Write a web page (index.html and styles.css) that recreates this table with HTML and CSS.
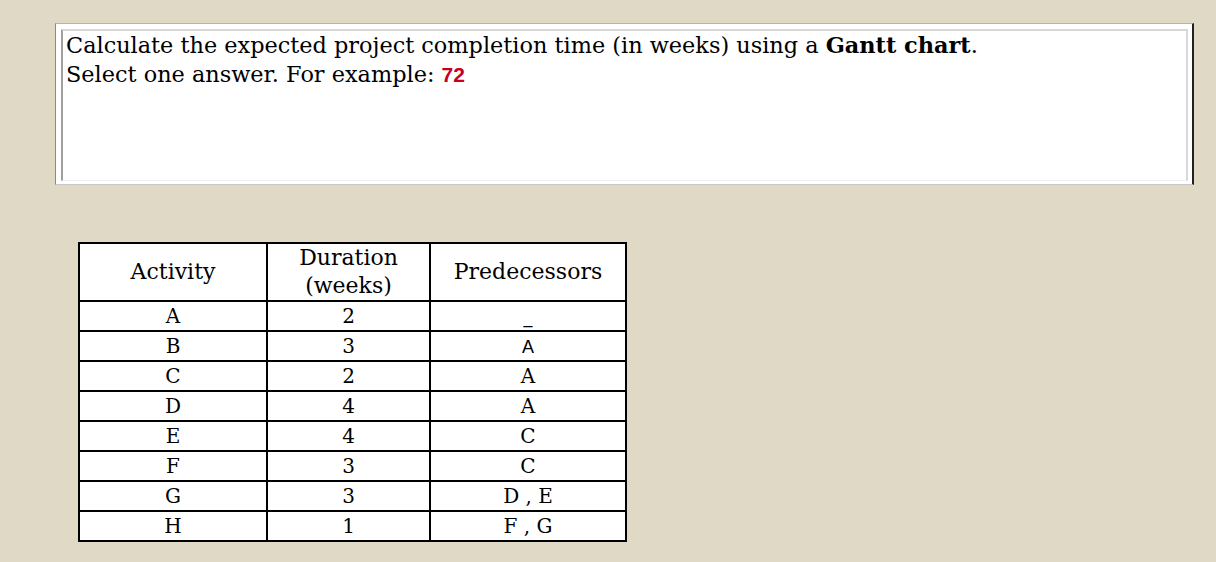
FILE: index.html
```html
<!DOCTYPE html>
<html>
<head>
<meta charset="utf-8">
<link rel="stylesheet" href="styles.css">
</head>
<body>
<div class="question">
  <div class="question-inner">
    <div class="line">Calculate the expected project completion time (in weeks) using a <b>Gantt chart</b>.</div>
    <div class="line">Select one answer. For example: <span class="example">72</span></div>
  </div>
</div>
<table class="activities">
  <thead>
    <tr>
      <th class="c1">Activity</th>
      <th class="c2">Duration<br>(weeks)</th>
      <th class="c3">Predecessors</th>
    </tr>
  </thead>
  <tbody>
    <tr><td>A</td><td>2</td><td><span class="dash">_</span></td></tr>
    <tr><td>B</td><td>3</td><td><span class="sans">A</span></td></tr>
    <tr><td>C</td><td>2</td><td>A</td></tr>
    <tr><td>D</td><td>4</td><td>A</td></tr>
    <tr><td>E</td><td>4</td><td>C</td></tr>
    <tr><td>F</td><td>3</td><td>C</td></tr>
    <tr><td>G</td><td>3</td><td>D , E</td></tr>
    <tr><td>H</td><td>1</td><td>F , G</td></tr>
  </tbody>
</table>
</body>
</html>
```
FILE: styles.css
```css
html, body {
  margin: 0;
  padding: 0;
  background: #dfd9c6;
}
body {
  padding: 23px 0 0 55px;
  font-family: "DejaVu Serif", serif;
  color: #000;
}
.question {
  width: 1139px;
  height: 162px;
  background: #fff;
  border-top: 1px solid #b4b4b4;
  border-left: 1px solid #8a8a8a;
  border-right: 2px solid #222;
  border-bottom: 1px solid #c8c8c8;
  padding: 5px 4px 3px 5px;
  box-sizing: border-box;
}
.question-inner {
  height: 152px;
  box-sizing: border-box;
  border-top: 2px solid #d8d8d8;
  border-left: 2px solid #a0a0a0;
  border-right: 2px solid #d8d8d8;
  border-bottom: 1px solid #eee;
  padding: 0 0 0 3px;
  font-size: 22.4px;
  line-height: 29px;
}
.question-inner b {
  font-weight: bold;
}
.example {
  font-family: "Liberation Sans", sans-serif;
  font-weight: bold;
  color: #c8001e;
  font-size: 21px;
}
.activities {
  margin: 57px 0 0 23px;
  border-collapse: collapse;
  border: 2px solid #000;
  background: #fff;
  font-size: 20px;
}
.activities th, .activities td {
  border: 2px solid #000;
  text-align: center;
  padding: 0;
  font-weight: normal;
}
.activities th {
  height: 56px;
  line-height: 28px;
  font-size: 22px;
}
.activities td {
  height: 28px;
  line-height: 28px;
}
.c1 { width: 186px; }
.c2 { width: 161px; }
.c3 { width: 194px; }
.sans {
  font-family: "Liberation Sans", sans-serif;
  font-size: 18px;
  line-height: 1;
}
.dash {
  font-family: "Liberation Sans", sans-serif;
  font-size: 16px;
  line-height: 1;
  position: relative;
  top: 1px;
}
```
